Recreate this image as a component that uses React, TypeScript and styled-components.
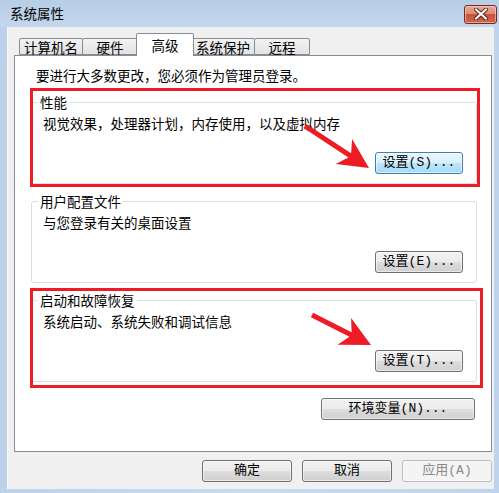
import React from 'react';
import styled, { createGlobalStyle } from 'styled-components';

const GlobalStyle = createGlobalStyle`
  html, body {
    margin: 0;
    padding: 0;
    background: #c4d7ec;
  }
  body {
    font-family: "Noto Sans CJK SC", "Liberation Sans", sans-serif;
    font-size: 13.5px;
    color: #000;
  }
`;

const Window = styled.div`
  width: 499px;
  height: 493px;
  display: flex;
  flex-direction: column;
  background: linear-gradient(90deg, #bcd2ea 0%, #c8dbef 50%, #bfd4ec 100%);
  overflow: hidden;
`;

const TitleBar = styled.div`
  height: 27px;
  flex: none;
  display: flex;
  align-items: center;
  justify-content: space-between;
  padding: 0 2px 0 10px;
  background: linear-gradient(#b7cee7, #c3d7ed);
`;

const Title = styled.span`
  font-size: 13.5px;
  line-height: 16px;
  margin-top: -1px;
`;

const CloseButton = styled.div`
  width: 33px;
  height: 19px;
  margin-top: 1px;
  box-sizing: border-box;
  border: 1px solid #6f2a22;
  border-radius: 3px;
  background: linear-gradient(#e9a894 0%, #dc8a74 45%, #c8533a 50%, #d06448 100%);
  box-shadow: inset 0 0 0 1px rgba(255, 220, 210, 0.55);
  display: flex;
  align-items: center;
  justify-content: center;
`;

const Body = styled.div`
  flex: 1;
  margin: 0 5px 4px 7px;
  padding: 6px 2px 0 7px;
  background: #f0f0f0;
  display: flex;
  flex-direction: column;
  box-shadow: inset 1px 0 0 #fafafa;
`;

const TabStrip = styled.div`
  height: 22px;
  display: flex;
  align-items: flex-end;
  padding-left: 5px;
`;

const Tab = styled.div<{ $active?: boolean }>`
  position: relative;
  z-index: ${p => (p.$active ? 2 : 1)};
  box-sizing: border-box;
  height: ${p => (p.$active ? 23 : 17)}px;
  min-width: ${p => (p.$active ? 58 : 56)}px;
  margin: 0 ${p => (p.$active ? -2 : 0)}px ${p => (p.$active ? -1 : 0)}px;
  margin-left: ${p => (p.$active ? -2 : -1)}px;
  padding: 0 4px;
  border: 1px solid #898c95;
  border-bottom: ${p => (p.$active ? 'none' : '1px solid #898c95')};
  border-radius: 2px 2px 0 0;
  background: ${p => (p.$active ? '#ffffff' : 'linear-gradient(#f3f3f3, #e3e3e3)')};
  display: flex;
  align-items: center;
  justify-content: center;
  font-size: 13.5px;
  line-height: 16px;
  white-space: nowrap;

  &:first-child {
    margin-left: 0;
  }
`;

const Panel = styled.div`
  position: relative;
  z-index: 1;
  box-sizing: border-box;
  height: 397px;
  border: 1px solid #898c95;
  background: #ffffff;
  padding: 10px 14px 0 16px;
  display: flex;
  flex-direction: column;
  gap: 9px;
`;

const Note = styled.div`
  line-height: 18px;
  padding-left: 5px;
  margin-bottom: 1px;
`;

const GroupWrap = styled.div`
  position: relative;
`;

const GroupBox = styled.fieldset`
  margin: 0;
  padding: 0 13px 9px 11px;
  border: 1px solid #d5dfe5;
  border-radius: 3px;
  display: flex;
  flex-direction: column;
`;

const Legend = styled.legend`
  padding: 0 2px;
  margin-left: -5px;
  line-height: 16px;
  font-size: 13.5px;
`;

const Description = styled.div`
  line-height: 18px;
  margin-top: 4px;
`;

const ButtonRow = styled.div`
  display: flex;
  justify-content: flex-end;
  margin-top: 20px;
`;

const Button = styled.div<{ $width?: number; $focused?: boolean; $disabled?: boolean }>`
  box-sizing: border-box;
  width: ${p => p.$width ?? 88}px;
  height: 22px;
  border: 1px solid ${p => (p.$focused ? '#3c7fb1' : p.$disabled ? '#b8bcbf' : '#707070')};
  border-radius: 3px;
  background: ${p =>
    p.$focused
      ? 'linear-gradient(#eaf6fd 0%, #d9f0fc 48%, #bee6fd 52%, #a7d9f5 100%)'
      : p.$disabled
      ? '#f4f4f4'
      : 'linear-gradient(#f2f2f2 0%, #ebebeb 48%, #dddddd 52%, #cfcfcf 100%)'};
  box-shadow: inset 0 0 0 1px rgba(255, 255, 255, 0.55);
  color: ${p => (p.$disabled ? '#8a8a8a' : '#000')};
  display: flex;
  align-items: center;
  justify-content: center;
  font-family: "Liberation Mono", "Noto Sans CJK SC", monospace;
  font-size: 13px;
  line-height: 16px;
  white-space: nowrap;
`;

const EnvRow = styled.div`
  display: flex;
  justify-content: flex-end;
  padding-right: 2px;
  margin-top: 7px;
`;

const Footer = styled.div`
  display: flex;
  justify-content: flex-end;
  gap: 10px;
  margin-top: 8px;
`;

const Highlight = styled.div<{ $t: number; $r: number; $b: number; $l: number }>`
  position: absolute;
  top: ${p => p.$t}px;
  right: ${p => p.$r}px;
  bottom: ${p => p.$b}px;
  left: ${p => p.$l}px;
  border: 3px solid #ee1c24;
  pointer-events: none;
`;

const ArrowLayer = styled.svg`
  position: absolute;
  left: 0;
  top: 0;
  width: 100%;
  height: 100%;
  overflow: visible;
  pointer-events: none;
`;

type Pt = [number, number];

// thick arrow outline from tail to tip, barbs swept back a little
function arrowPoints(tail: Pt, tip: Pt, shaft = 5, headLen = 30, headW = 30): string {
  const [x1, y1] = tail;
  const [x2, y2] = tip;
  const len = Math.hypot(x2 - x1, y2 - y1);
  const ux = (x2 - x1) / len;
  const uy = (y2 - y1) / len;
  const px = -uy;
  const py = ux;
  const bx = x2 - ux * headLen;
  const by = y2 - uy * headLen;
  const nx = bx + ux * 7;
  const ny = by + uy * 7;
  const pts: Pt[] = [
    [x1 + (px * shaft) / 2, y1 + (py * shaft) / 2],
    [nx + (px * shaft) / 2, ny + (py * shaft) / 2],
    [bx + (px * headW) / 2, by + (py * headW) / 2],
    [x2, y2],
    [bx - (px * headW) / 2, by - (py * headW) / 2],
    [nx - (px * shaft) / 2, ny - (py * shaft) / 2],
    [x1 - (px * shaft) / 2, y1 - (py * shaft) / 2],
  ];
  return pts.map(p => `${p[0].toFixed(1)},${p[1].toFixed(1)}`).join(' ');
}

type Mark = {
  box: [number, number, number, number];
  tail: Pt;
  tip: Pt;
};

type GroupProps = {
  title: string;
  text: string;
  button: string;
  focused?: boolean;
  mark?: Mark;
};

function Group({ title, text, button, focused, mark }: GroupProps) {
  return (
    <GroupWrap>
      <GroupBox>
        <Legend>{title}</Legend>
        <Description>{text}</Description>
        <ButtonRow>
          <Button $focused={focused}>{button}</Button>
        </ButtonRow>
      </GroupBox>
      {mark && (
        <>
          <Highlight $t={mark.box[0]} $r={mark.box[1]} $b={mark.box[2]} $l={mark.box[3]} />
          <ArrowLayer>
            <polygon points={arrowPoints(mark.tail, mark.tip)} fill="#ee1c24" />
          </ArrowLayer>
        </>
      )}
    </GroupWrap>
  );
}

const tabs = ['计算机名', '硬件', '高级', '系统保护', '远程'];

export default function App() {
  return (
    <>
      <GlobalStyle />
      <Window>
        <TitleBar>
          <Title>系统属性</Title>
          <CloseButton>
            <svg width="14" height="12" viewBox="0 0 14 12">
              <path d="M2 1.5 L12 10.5 M12 1.5 L2 10.5" stroke="#5a1f17" strokeWidth="4" strokeLinecap="round" />
              <path d="M2 1.5 L12 10.5 M12 1.5 L2 10.5" stroke="#ffffff" strokeWidth="2.2" strokeLinecap="round" />
            </svg>
          </CloseButton>
        </TitleBar>
        <Body>
          <TabStrip>
            {tabs.map(t => (
              <Tab key={t} $active={t === '高级'}>
                {t}
              </Tab>
            ))}
          </TabStrip>
          <Panel>
            <Note>要进行大多数更改，您必须作为管理员登录。</Note>
            <Group
              title="性能"
              text="视觉效果，处理器计划，内存使用，以及虚拟内存"
              button="设置(S)..."
              focused
              mark={{ box: [-6, -3, -3, -1], tail: [274, 32], tip: [338, 74] }}
            />
            <Group title="用户配置文件" text="与您登录有关的桌面设置" button="设置(E)..." />
            <Group
              title="启动和故障恢复"
              text="系统启动、系统失败和调试信息"
              button="设置(T)..."
              mark={{ box: [-4, -6, -6, -1], tail: [281, 23], tip: [340, 53] }}
            />
            <EnvRow>
              <Button $width={154}>环境变量(N)...</Button>
            </EnvRow>
          </Panel>
          <Footer>
            <Button $width={90}>确定</Button>
            <Button $width={90}>取消</Button>
            <Button $width={90} $disabled>
              应用(A)
            </Button>
          </Footer>
        </Body>
      </Window>
    </>
  );
}
